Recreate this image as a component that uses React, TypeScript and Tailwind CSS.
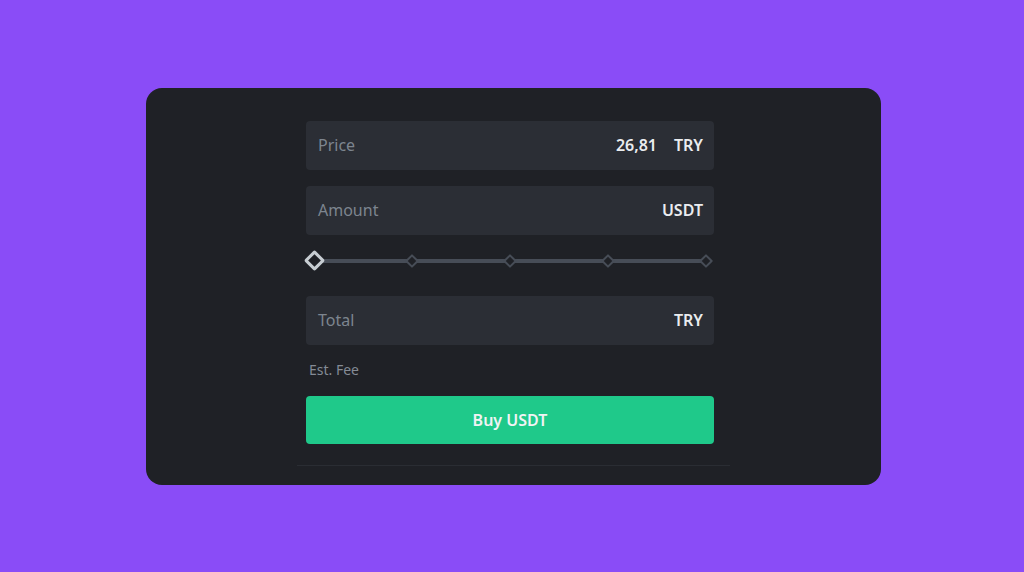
import React from "react";

function Field({ label, value, unit }: { label: string; value?: string; unit: string }) {
  return (
    <div className="flex h-[49px] items-center rounded-[4px] bg-[#2b2e35] pl-[12px] pr-[11px]">
      <span className="text-[16px] text-[#7d858f]">{label}</span>
      <div className="ml-auto flex items-center gap-[17px] text-[16px] font-semibold text-[#eaecef]">
        {value && <span>{value}</span>}
        <span>{unit}</span>
      </div>
    </div>
  );
}

function SmallDiamond() {
  return (
    <div className="relative flex w-0 items-center justify-center">
      <div className="h-[10px] w-[10px] shrink-0 rotate-45 rounded-[1px] border-[2px] border-[#474d57] bg-[#1f2126]" />
    </div>
  );
}

export default function App() {
  return (
    <div
      className="flex h-[572px] w-full items-center justify-center bg-[#8a4cf7]"
      style={{ fontFamily: '"Noto Sans", "Liberation Sans", Arial, sans-serif' }}
    >
      <div className="ml-[3px] flex h-[397px] w-[735px] flex-col rounded-[16px] bg-[#1f2126] pt-[33px]">
        <div className="ml-[160px] flex w-[408px] flex-col">
          <Field label="Price" value="26,81" unit="TRY" />
          <div className="mt-[16px]">
            <Field label="Amount" unit="USDT" />
          </div>
          <div className="relative flex h-[61px] items-center justify-between px-[8px] pb-[9px]">
            <div className="absolute left-[8px] right-[8px] top-[24px] h-[4px] bg-[#474d57]" />
            <div className="relative flex w-0 items-center justify-center">
              <div className="h-[15px] w-[15px] shrink-0 rotate-45 rounded-[2px] border-[3px] border-[#c7cdd2] bg-[#1f2126]" />
            </div>
            <SmallDiamond />
            <SmallDiamond />
            <SmallDiamond />
            <SmallDiamond />
          </div>
          <Field label="Total" unit="TRY" />
          <div className="mt-[16px] pl-[3px] text-[14px] leading-[18px] text-[#848b95]">Est. Fee</div>
          <button className="mt-[17px] flex h-[48px] items-center justify-center rounded-[4px] bg-[#1fc98a] text-[16px] font-semibold text-[#f1f3f4]">
            Buy USDT
          </button>
        </div>
        <div className="ml-[151px] mt-[21px] h-px w-[433px] bg-[#2a2d33]" />
      </div>
    </div>
  );
}
